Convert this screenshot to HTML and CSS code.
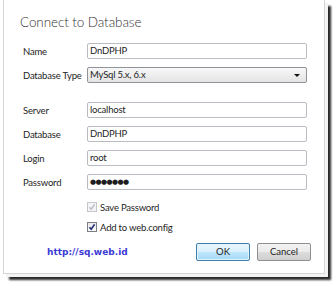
FILE: index.html
```html
<!DOCTYPE html>
<html lang="en">
<head>
    <meta charset="UTF-8">
    <title>Connect to Database</title>
    <link rel="stylesheet" href="styles.css">
</head>
<body>

<div id="screen">
    <div id="dialog">
        <h1 class="title">Connect to Database</h1>

        <div class="form">
            <div class="row">
                <span class="label">Name</span>
                <div class="field">DnDPHP</div>
            </div>
            <div class="row">
                <span class="label">Database Type</span>
                <div class="field select">
                    <span>MySql 5.x, 6.x</span>
                    <span class="arrow"></span>
                </div>
            </div>

            <div class="row spaced">
                <span class="label">Server</span>
                <div class="field">localhost</div>
            </div>
            <div class="row">
                <span class="label">Database</span>
                <div class="field">DnDPHP</div>
            </div>
            <div class="row">
                <span class="label">Login</span>
                <div class="field">root</div>
            </div>
            <div class="row">
                <span class="label">Password</span>
                <div class="field password">&#9679;&#9679;&#9679;&#9679;&#9679;&#9679;&#9679;</div>
            </div>
        </div>

        <div class="checks">
            <label class="check disabled">
                <span class="box">
                    <svg width="8" height="8" viewBox="0 0 8 8"><path d="M1.5 4.2 L3.2 6.2 L6.6 1.4" fill="none" stroke="#b8bcc8" stroke-width="1.4"/></svg>
                </span>
                Save Password
            </label>
            <label class="check">
                <span class="box">
                    <svg width="8" height="8" viewBox="0 0 8 8"><path d="M1.5 4.2 L3.2 6.2 L6.6 1.4" fill="none" stroke="#1d2a72" stroke-width="1.6"/></svg>
                </span>
                Add to web.config
            </label>
        </div>

        <div class="footer">
            <span class="link">http://sq.web.id</span>
            <div class="buttons">
                <div class="button default">OK</div>
                <div class="button">Cancel</div>
            </div>
        </div>
    </div>
</div>

</body>
</html>
```
FILE: styles.css
```css
body {
    margin: 0;
    background: #fff;
    font-family: 'Lato', sans-serif;
    color: #1e1e1e;
}

#screen {
    width: 334px;
    height: 282px;
    overflow: hidden;
}

#dialog {
    box-sizing: border-box;
    width: 322px;
    height: 274px;
    margin-left: 3px;
    padding: 13px 13px 0 16px;
    background: #fff;
    border: 1px solid #d4d6da;
    border-top: none;
    box-shadow: 3px 3px 0 #f4f4f4, 6px 6px 2px #2a2a2a;
}

.title {
    margin: 0;
    font-size: 13.5px;
    font-weight: 300;
    letter-spacing: -0.1px;
    line-height: 18px;
    color: #333;
    white-space: nowrap;
}

.form {
    display: flex;
    flex-direction: column;
    gap: 8px;
    margin-top: 12px;
    padding-left: 3px;
}

.row {
    display: grid;
    grid-template-columns: 64px 220px;
    align-items: center;
    height: 16px;
}

.row.spaced {
    margin-top: 11px;
}

.label {
    font-size: 9.5px;
    letter-spacing: -0.2px;
    white-space: nowrap;
}

.field {
    box-sizing: border-box;
    height: 16px;
    padding: 0 2px;
    border: 1px solid #b9bcc2;
    border-radius: 2px;
    font-size: 9.5px;
    letter-spacing: -0.2px;
    line-height: 14px;
    background: #fff;
}

.select {
    display: flex;
    justify-content: space-between;
    align-items: center;
    border-color: #8f939a;
    background: linear-gradient(#f7f7f7, #e4e4e4);
}

.arrow {
    width: 0;
    height: 0;
    margin-right: 4px;
    border-left: 3px solid transparent;
    border-right: 3px solid transparent;
    border-top: 3px solid #111;
}

.password {
    font-family: 'DejaVu Sans', sans-serif;
    font-size: 7px;
    letter-spacing: -0.6px;
}

.checks {
    display: flex;
    flex-direction: column;
    gap: 8px;
    margin-top: 11px;
    padding-left: 67px;
}

.check {
    display: flex;
    align-items: center;
    gap: 3px;
    font-size: 9.5px;
    letter-spacing: -0.2px;
    height: 12px;
}

.box {
    box-sizing: border-box;
    display: flex;
    align-items: center;
    justify-content: center;
    width: 10px;
    height: 10px;
    border: 1px solid #7a7e86;
    background: linear-gradient(#e8e8ea, #fbfbfb);
}

.check.disabled .box {
    border-color: #c4c6cc;
    background: #f4f4f6;
}

.footer {
    display: flex;
    justify-content: space-between;
    align-items: center;
    margin-top: 10px;
    padding-left: 27px;
}

.link {
    font-family: 'DejaVu Sans', sans-serif;
    font-weight: bold;
    font-size: 9px;
    color: #3a3ad4;
}

.buttons {
    display: flex;
    gap: 7px;
}

.button {
    box-sizing: border-box;
    width: 54px;
    height: 18px;
    border: 1px solid #8e8f8f;
    border-radius: 2px;
    background: linear-gradient(#f2f2f2 0%, #ebebeb 50%, #dddddd 51%, #cfcfcf 100%);
    font-size: 9.5px;
    line-height: 16px;
    text-align: center;
}

.button.default {
    border-color: #3c7fb1;
    background: linear-gradient(#eaf6fd 0%, #d9f0fc 50%, #bee6fd 51%, #a7d9f5 100%);
    box-shadow: inset 0 0 0 1px #e4f2fa;
}
```
